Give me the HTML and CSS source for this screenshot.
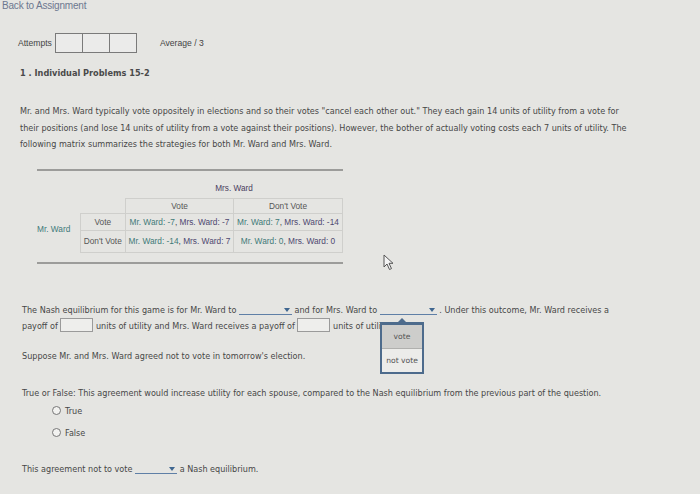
FILE: index.html
```html
<!DOCTYPE html>
<html>
<head>
<meta charset="utf-8">
<link rel="stylesheet" href="styles.css">
</head>
<body>
<div class="page">
  <a class="back">Back to Assignment</a>
  <div class="attempts">
    <span class="att-label">Attempts</span>
    <span class="boxes"><span class="box"></span><span class="box"></span><span class="box"></span></span>
    <span class="avg">Average / 3</span>
  </div>
  <h1 class="title">1 . Individual Problems 15-2</h1>
  <p class="para">Mr. and Mrs. Ward typically vote oppositely in elections and so their votes "cancel each other out." They each gain 14 units of utility from a vote for their positions (and lose 14 units of utility from a vote against their positions). However, the bother of actually voting costs each 7 units of utility. The following matrix summarizes the strategies for both Mr. Ward and Mrs. Ward.</p>

  <div class="matrix">
    <div class="rule"></div>
    <div class="caption">Mrs. Ward</div>
    <table class="grid">
      <tr class="hrow">
        <td class="blank"></td>
        <td class="blank2"></td>
        <td class="colh c1">Vote</td>
        <td class="colh c2">Don't Vote</td>
      </tr>
      <tr class="r1">
        <td class="player" rowspan="2">Mr. Ward</td>
        <td class="rowh">Vote</td>
        <td class="cell"><span class="mr">Mr. Ward: -7</span>, <span class="mrs">Mrs. Ward: -7</span></td>
        <td class="cell"><span class="mr">Mr. Ward: 7</span>, <span class="mrs">Mrs. Ward: -14</span></td>
      </tr>
      <tr class="r2">
        <td class="rowh">Don't Vote</td>
        <td class="cell"><span class="mr">Mr. Ward: -14</span>, <span class="mrs">Mrs. Ward: 7</span></td>
        <td class="cell"><span class="mr">Mr. Ward: 0</span>, <span class="mrs">Mrs. Ward: 0</span></td>
      </tr>
    </table>
    <div class="rule rule-b"></div>
  </div>

  <p class="nash">The Nash equilibrium for this game is for Mr. Ward to <span class="dd dd-a"></span> and for Mrs. Ward to <span class="dd dd-b"></span> . Under this outcome, Mr. Ward receives a <span>payoff of</span> <span class="inp"></span> units of utility and Mrs. Ward receives a payoff of <span class="inp"></span> units of utility.</p>

  <p class="suppose">Suppose Mr. and Mrs. Ward agreed not to vote in tomorrow's election.</p>
  <p class="tf">True or False: This agreement would increase utility for each spouse, compared to the Nash equilibrium from the previous part of the question.</p>
  <div class="radios">
    <label class="radio"><span class="circle"></span>True</label>
    <label class="radio"><span class="circle"></span>False</label>
  </div>
  <p class="last">This agreement not to vote <span class="dd dd-c"></span> a Nash equilibrium.</p>

  <div class="popup">
    <div class="opt sel">vote</div>
    <div class="opt">not vote</div>
  </div>
  <svg class="cursor" width="12" height="17" viewBox="0 0 12 17"><path d="M1 1 L1 13 L4 10 L6.5 15.5 L8.5 14.6 L6 9.3 L10 9.3 Z" fill="#f4f4f4" stroke="#555" stroke-width="1"/></svg>
</div>
</body>
</html>
```
FILE: styles.css
```css
html, body { margin: 0; padding: 0; }
body {
  background: #e5e5e2;
  color: #474747;
  font-family: "DejaVu Sans", Verdana, sans-serif;
  font-size: 8.1px;
  width: 700px;
  height: 494px;
  overflow: hidden;
}
.page { position: relative; width: 700px; height: 494px; }
.back {
  display: block;
  padding-left: 2px;
  font-family: "Liberation Sans", Arial, sans-serif;
  font-size: 10px;
  line-height: 11px;
  color: #6d7890;
  letter-spacing: -0.2px;
}
.attempts {
  display: flex;
  align-items: center;
  margin-top: 22px;
  padding-left: 18px;
  height: 19px;
  font-family: "Liberation Sans", Arial, sans-serif;
  font-size: 8.6px;
  color: #444;
}
.boxes { display: flex; margin-left: 4px; }
.box {
  width: 26px; height: 18px;
  border: 1px solid #7a7a7a;
  margin-left: -1px;
  background: #ebebea;
}
.avg { margin-left: 23px; }
.title {
  margin: 15px 0 0 20px;
  font-size: 8.2px;
  line-height: 12px;
  font-weight: bold;
  color: #4a4a4a;
}
.para {
  margin: 24px 0 0 20px;
  width: 618px;
  line-height: 16.5px;
}
.matrix { margin: 16px 0 0 37px; width: 306px; }
.rule { height: 2px; background: #9c9c9a; }
.caption {
  margin-top: 12px;
  height: 15px;
  line-height: 12px;
  padding-left: 88px;
  text-align: center;
  font-family: "Liberation Sans", Arial, sans-serif;
  font-size: 8.2px;
  color: #4a4060;
}
.grid {
  border-collapse: collapse;
  font-family: "Liberation Sans", Arial, sans-serif;
  font-size: 8.3px;
  width: 306px;
}
.grid td { padding: 0; text-align: center; white-space: nowrap; }
.hrow td { height: 14px; }
.r1 td { height: 16px; }
.r2 td { height: 21px; }
.blank { width: 43px; }
.blank2 { width: 45px; }
.colh { border: 1px solid #cfcfcc; color: #555; }
.c1 { width: 107px; }
.rowh { border: 1px solid #cfcfcc; color: #555; }
.cell { border: 1px solid #cfcfcc; }
.player { color: #3f7a7a; text-align: left !important; padding-bottom: 8px !important; }
.mr { color: #3f7a78; }
.mrs { color: #4e4870; }
.rule-b { margin-top: 9px; }
.nash {
  margin: 39px 0 0 22px;
  width: 592px;
  line-height: 15px;
}
.dd {
  display: inline-block;
  width: 53px;
  height: 9px;
  border-bottom: 1px solid #5f7fa6;
  position: relative;
  vertical-align: -2px;
}
.dd::after {
  content: "";
  position: absolute;
  right: 2px; top: 3px;
  border-left: 3.5px solid transparent;
  border-right: 3.5px solid transparent;
  border-top: 4px solid #3f6690;
}
.dd-b { width: 57px; }
.dd-c { width: 42px; }
.inp {
  display: inline-block;
  width: 31px; height: 12px;
  border: 1px solid #9a9a9a;
  background: #eeeeec;
  vertical-align: -3px;
}
.suppose { margin: 16px 0 0 22px; line-height: 12px; }
.tf { margin: 25px 0 0 22px; line-height: 12px; }
.radios { margin: 6px 0 0 52px; display: flex; flex-direction: column; gap: 10px; }
.radio { display: flex; align-items: center; height: 12px; }
.circle {
  width: 7px; height: 7px;
  border: 1px solid #777;
  border-radius: 50%;
  background: #f2f2f0;
  margin-right: 4px;
}
.last { margin: 24px 0 0 22px; line-height: 12px; }
.popup {
  position: absolute;
  left: 380px; top: 322px;
  width: 40px;
  border: 2px solid #4d6b8c;
  border-top-width: 3px;
  background: #ececea;
  font-size: 7.6px;
  color: #555;
}
.popup::before {
  content: "";
  position: absolute;
  left: 15px; top: -7px;
  border-left: 5px solid transparent;
  border-right: 5px solid transparent;
  border-bottom: 5px solid #4d6b8c;
}
.opt { height: 23px; line-height: 23px; text-align: center; }
.opt.sel { background: #cdcdcb; border-bottom: 1px solid #b0b0ae; }
.cursor { position: absolute; left: 383px; top: 254px; }
```
